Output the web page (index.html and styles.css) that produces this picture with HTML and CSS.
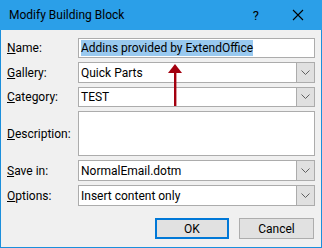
FILE: index.html
```html
<!DOCTYPE html>
<html lang="en">
<head>
    <meta charset="UTF-8">
    <title>Modify Building Block</title>
    <link rel="stylesheet" href="styles.css">
</head>
<body>
    <div class="window">
        <!-- Barra de título -->
        <div class="titlebar">
            <span class="title">Modify Building Block</span>
            <span class="help">?</span>
            <svg class="close" width="12" height="12" viewBox="0 0 12 12">
                <path d="M1 1 L11 11 M11 1 L1 11" stroke="#000" stroke-width="1.1" fill="none"/>
            </svg>
        </div>

        <div class="content">
            <div class="form">
                <label class="lbl"><u>N</u>ame:</label>
                <div class="field"><span class="selected">Addins provided by ExtendOffice</span></div>

                <label class="lbl"><u>G</u>allery:</label>
                <div class="field combo"><span class="value">Quick Parts</span><span class="drop"><svg width="9" height="6" viewBox="0 0 9 6"><path d="M0.5 0.5 L4.5 4.5 L8.5 0.5" stroke="#606060" fill="none"/></svg></span></div>

                <label class="lbl"><u>C</u>ategory:</label>
                <div class="field combo"><span class="value">TEST</span><span class="drop"><svg width="9" height="6" viewBox="0 0 9 6"><path d="M0.5 0.5 L4.5 4.5 L8.5 0.5" stroke="#606060" fill="none"/></svg></span></div>

                <label class="lbl"><u>D</u>escription:</label>
                <div class="field area"></div>

                <label class="lbl"><u>S</u>ave in:</label>
                <div class="field combo"><span class="value">NormalEmail.dotm</span><span class="drop"><svg width="9" height="6" viewBox="0 0 9 6"><path d="M0.5 0.5 L4.5 4.5 L8.5 0.5" stroke="#606060" fill="none"/></svg></span></div>

                <label class="lbl"><u>O</u>ptions:</label>
                <div class="field combo"><span class="value">Insert content only</span><span class="drop"><svg width="9" height="6" viewBox="0 0 9 6"><path d="M0.5 0.5 L4.5 4.5 L8.5 0.5" stroke="#606060" fill="none"/></svg></span></div>
            </div>

            <div class="buttons">
                <button class="btn default">OK</button>
                <button class="btn">Cancel</button>
            </div>
        </div>

        <!-- Seta vermelha apontando para o nome -->
        <svg class="arrow" width="16" height="44" viewBox="0 0 16 44">
            <path d="M8 0 L15 9 L1 9 Z" fill="#a3000f"/>
            <rect x="7" y="8" width="2.4" height="34" fill="#a3000f"/>
        </svg>
    </div>
</body>
</html>
```

FILE: styles.css
```css
body {
    margin: 0;
    font: 12px Roboto, "Noto Sans", sans-serif;
    color: #000;
}

.window {
    position: relative;
    width: 322px;
    height: 248px;
    box-sizing: border-box;
    background: #f0f0f0;
    border: 1px solid #1b8fdc;
    border-top: none;
}

.titlebar {
    height: 30px;
    margin: 0 -1px;
    background: #2b9fe8;
    display: flex;
    align-items: center;
    padding-left: 9px;
}

.title {
    flex: 1;
    font-size: 12px;
}

.help {
    font-size: 13px;
    margin-right: 33px;
}

.close {
    margin-right: 18px;
}

.content {
    padding: 8px 6px 0 6px;
}

.form {
    display: grid;
    grid-template-columns: 71px 237px;
    grid-template-rows: 20px 21px 20px 45px 21px 21px;
    row-gap: 4px;
}

.lbl {
    display: flex;
    align-items: center;
}

.field {
    box-sizing: border-box;
    background: #fff;
    border: 1px solid #acacac;
    display: flex;
    align-items: center;
    padding-left: 2px;
    white-space: nowrap;
}

.selected {
    background: #99c9ef;
    line-height: 16px;
}

.combo .value {
    flex: 1;
}

.drop {
    width: 17px;
    align-self: stretch;
    background: #e0e0e0;
    border-left: 1px solid #acacac;
    display: flex;
    align-items: center;
    justify-content: center;
}

.buttons {
    display: flex;
    justify-content: flex-end;
    gap: 10px;
    margin-top: 12px;
    padding-right: 1px;
}

.btn {
    box-sizing: border-box;
    width: 75px;
    height: 21px;
    background: #e1e1e1;
    border: 1px solid #adadad;
    font: 12px Roboto, "Noto Sans", sans-serif;
    padding: 0;
}

.btn.default {
    width: 74px;
    border: 2px solid #0078d7;
}

.arrow {
    position: absolute;
    left: 166px;
    top: 64px;
}
```
